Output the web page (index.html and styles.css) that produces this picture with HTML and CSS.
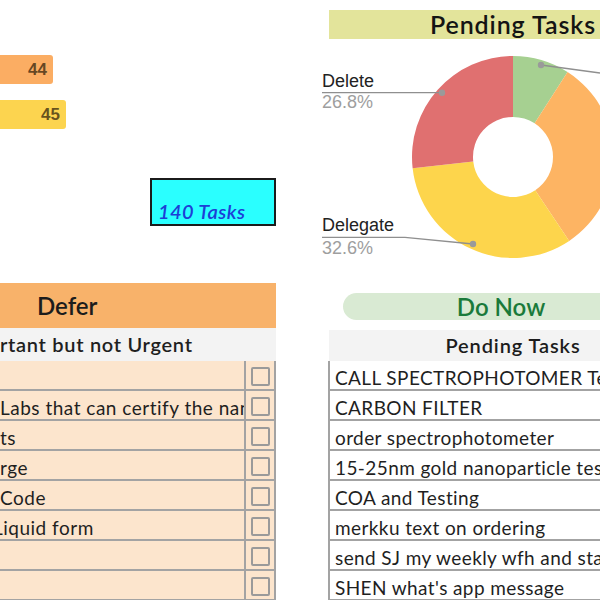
FILE: index.html
```html
<!DOCTYPE html>
<html>
<head>
<meta charset="utf-8">
<link rel="stylesheet" href="styles.css">
</head>
<body>
<div class="page">
  <div class="top">
    <div class="top-left">
      <div class="bars">
        <div class="bar bar-orange">44</div>
        <div class="bar bar-yellow">45</div>
      </div>
      <div class="total"><span>140 Tasks</span></div>
    </div>
    <div class="top-right">
      <div class="chart-title">Pending Tasks</div>
      <svg class="donut" width="300" height="244" viewBox="0 0 300 244">
        <path d="M213,17 A101,101 0 0 1 267.56,33.01 L234.61,84.34 A40,40 0 0 0 213,78 Z" fill="#a6d091"/>
        <path d="M267.56,33.01 A101,101 0 0 1 269.19,201.93 L235.25,151.24 A40,40 0 0 0 234.61,84.34 Z" fill="#fdb463"/>
        <path d="M269.19,201.93 A101,101 0 0 1 112.63,129.26 L173.25,122.46 A40,40 0 0 0 235.25,151.24 Z" fill="#fdd54c"/>
        <path d="M112.63,129.26 A101,101 0 0 1 213,17 L213,78 A40,40 0 0 0 173.25,122.46 Z" fill="#e07070"/>
        <polyline points="22,53.7 142,53.7" fill="none" stroke="#8f8f8f" stroke-width="1.3"/>
        <circle cx="142" cy="53.7" r="3.2" fill="#9a9a9a"/>
        <polyline points="22,198.3 105,198.3 173,205" fill="none" stroke="#8f8f8f" stroke-width="1.3"/>
        <circle cx="173" cy="205" r="3.2" fill="#9a9a9a"/>
        <polyline points="241,26 300,34" fill="none" stroke="#8f8f8f" stroke-width="1.3"/>
        <circle cx="241" cy="26" r="3.2" fill="#9a9a9a"/>
        <text class="lbl" x="22" y="48">Delete</text>
        <text class="pct" x="22" y="69">26.8%</text>
        <text class="lbl" x="22" y="192">Delegate</text>
        <text class="pct" x="22" y="215">32.6%</text>
      </svg>
    </div>
  </div>
  <div class="bottom">
    <div class="defer">
      <div class="defer-head">Defer</div>
      <div class="defer-sub">rtant but not Urgent</div>
      <div class="drow"><div class="dtext"></div><div class="dcheck"><span class="box"></span></div></div>
      <div class="drow"><div class="dtext">Labs that can certify the nano</div><div class="dcheck"><span class="box"></span></div></div>
      <div class="drow"><div class="dtext">ts</div><div class="dcheck"><span class="box"></span></div></div>
      <div class="drow"><div class="dtext">rge</div><div class="dcheck"><span class="box"></span></div></div>
      <div class="drow"><div class="dtext">Code</div><div class="dcheck"><span class="box"></span></div></div>
      <div class="drow"><div class="dtext shift">Liquid form</div><div class="dcheck"><span class="box"></span></div></div>
      <div class="drow"><div class="dtext"></div><div class="dcheck"><span class="box"></span></div></div>
      <div class="drow"><div class="dtext"></div><div class="dcheck"><span class="box"></span></div></div>
    </div>
    <div class="donow">
      <div class="donow-head">Do Now</div>
      <div class="donow-sub">Pending Tasks</div>
      <div class="nrow">CALL SPECTROPHOTOMER Tech</div>
      <div class="nrow">CARBON FILTER</div>
      <div class="nrow">order spectrophotometer</div>
      <div class="nrow">15-25nm gold nanoparticle test</div>
      <div class="nrow">COA and Testing</div>
      <div class="nrow">merkku text on ordering</div>
      <div class="nrow">send SJ my weekly wfh and status</div>
      <div class="nrow">SHEN what's app message</div>
    </div>
  </div>
</div>
</body>
</html>
```
FILE: styles.css
```css
html, body {
  margin: 0;
  padding: 0;
  background: #ffffff;
}
.page {
  width: 600px;
  height: 600px;
  overflow: hidden;
  font-family: Lato, "Noto Sans", sans-serif;
  color: #1f1f1f;
}
.top {
  display: grid;
  grid-template-columns: 300px 300px;
  height: 283px;
}
.top-left {
  display: flex;
  flex-direction: column;
  padding-top: 55px;
}
.bars {
  display: flex;
  flex-direction: column;
  gap: 16px;
}
.bar {
  height: 29px;
  box-sizing: border-box;
  border-radius: 0 3px 3px 0;
  font-family: "Liberation Sans", Arial, sans-serif;
  font-weight: bold;
  font-size: 17px;
  line-height: 29px;
  text-align: right;
  padding-right: 6px;
  color: rgba(45, 32, 10, 0.72);
}
.bar-orange {
  width: 53px;
  background: #fbad63;
}
.bar-yellow {
  width: 66px;
  background: #fcd44f;
}
.total {
  margin-top: 49px;
  margin-left: 150px;
  width: 126px;
  height: 48px;
  box-sizing: border-box;
  border: 2px solid #1b1b1b;
  background: #2affff;
  display: flex;
  align-items: flex-end;
  padding-left: 6px;
  padding-bottom: 2px;
}
.total span {
  font-style: italic;
  font-weight: 600;
  font-size: 20px;
  letter-spacing: 0.4px;
  line-height: 22px;
  color: #1d3fd6;
}
.top-right {
  display: flex;
  flex-direction: column;
}
.chart-title {
  margin-top: 10px;
  margin-left: 29px;
  height: 29px;
  background: #e3e49b;
  text-align: right;
  padding-right: 4px;
  font-size: 25px;
  font-weight: 600;
  letter-spacing: 0.9px;
  line-height: 29px;
  color: #141414;
}
.donut {
  display: block;
}
.lbl {
  font-family: "Liberation Sans", Arial, sans-serif;
  font-size: 18px;
  fill: #222222;
}
.pct {
  font-family: "Liberation Sans", Arial, sans-serif;
  font-size: 18px;
  fill: #9e9e9e;
}
.bottom {
  display: flex;
}
.defer {
  width: 276px;
  flex: none;
}
.defer-head {
  height: 45px;
  background: #f8b26a;
  font-size: 24px;
  font-weight: 600;
  line-height: 45px;
  padding-left: 37px;
  color: #1c1c1c;
}
.defer-sub {
  height: 33px;
  background: #f3f3f3;
  font-size: 20px;
  font-weight: 600;
  letter-spacing: 0.7px;
  line-height: 33px;
  padding-left: 0;
  white-space: nowrap;
  overflow: hidden;
}
.drow {
  display: flex;
  height: 30px;
  box-sizing: border-box;
  border-bottom: 2px solid #a3a3a3;
  background: #fce5cd;
}
.dtext {
  width: 244px;
  flex: none;
  box-sizing: border-box;
  overflow: hidden;
  white-space: nowrap;
  font-size: 19px;
  letter-spacing: 0.5px;
  line-height: 22px;
  padding-top: 6px;
  padding-left: 0;
}
.dtext.shift {
  text-indent: -7px;
}
.dcheck {
  width: 32px;
  flex: none;
  box-sizing: border-box;
  border-left: 2px solid #a3a3a3;
  border-right: 2px solid #a3a3a3;
  display: flex;
  justify-content: center;
  align-items: flex-start;
  padding-top: 6px;
}
.box {
  width: 19px;
  height: 19px;
  box-sizing: border-box;
  border: 2px solid #9a9a9a;
  border-radius: 2px;
}
.donow {
  margin-left: 52px;
  width: 368px;
  flex: none;
}
.donow-head {
  margin-top: 10px;
  margin-left: 15px;
  height: 27px;
  width: 316px;
  border-radius: 14px 0 0 14px;
  background: #d9ead3;
  text-align: center;
  font-size: 24px;
  font-weight: 600;
  line-height: 27px;
  color: #1a7a3a;
}
.donow-sub {
  margin-top: 10px;
  margin-left: 1px;
  height: 31px;
  background: #f3f3f3;
  text-align: center;
  font-size: 20px;
  font-weight: 600;
  letter-spacing: 0.9px;
  line-height: 31px;
  color: #1c1c1c;
  width: 368px;
}
.nrow {
  height: 30px;
  box-sizing: border-box;
  border-left: 2px solid #a3a3a3;
  border-bottom: 2px solid #a3a3a3;
  white-space: nowrap;
  overflow: hidden;
  font-size: 19px;
  letter-spacing: 0.4px;
  line-height: 22px;
  padding-top: 6px;
  padding-left: 5px;
}
```
